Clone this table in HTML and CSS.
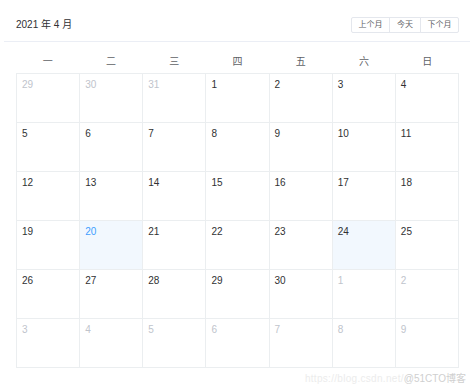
FILE: index.html
```html
<!DOCTYPE html>
<html lang="zh">
<head>
<meta charset="utf-8">
<link rel="stylesheet" href="styles.css">
</head>
<body>
<div class="calendar">
  <div class="cal-header">
    <div class="cal-title">2021 年 4 月</div>
    <div class="btn-group">
      <button class="btn">上个月</button>
      <button class="btn">今天</button>
      <button class="btn">下个月</button>
    </div>
  </div>
  <div class="cal-body">
    <div class="weekdays">
      <div>一</div><div>二</div><div>三</div><div>四</div><div>五</div><div>六</div><div>日</div>
    </div>
    <div class="grid">
      <div class="cell other">29</div><div class="cell other">30</div><div class="cell other">31</div><div class="cell">1</div><div class="cell">2</div><div class="cell">3</div><div class="cell">4</div>
      <div class="cell">5</div><div class="cell">6</div><div class="cell">7</div><div class="cell">8</div><div class="cell">9</div><div class="cell">10</div><div class="cell">11</div>
      <div class="cell">12</div><div class="cell">13</div><div class="cell">14</div><div class="cell">15</div><div class="cell">16</div><div class="cell">17</div><div class="cell">18</div>
      <div class="cell">19</div><div class="cell selected today">20</div><div class="cell">21</div><div class="cell">22</div><div class="cell">23</div><div class="cell selected">24</div><div class="cell">25</div>
      <div class="cell">26</div><div class="cell">27</div><div class="cell">28</div><div class="cell">29</div><div class="cell">30</div><div class="cell other">1</div><div class="cell other">2</div>
      <div class="cell other">3</div><div class="cell other">4</div><div class="cell other">5</div><div class="cell other">6</div><div class="cell other">7</div><div class="cell other">8</div><div class="cell other">9</div>
    </div>
  </div>
  <div class="watermark"><span class="wm-url">https://blog.csdn.net/</span><span class="wm-brand">@51CTO博客</span></div>
</div>
</body>
</html>
```

FILE: styles.css
```css
* { box-sizing: border-box; }
html, body { margin: 0; padding: 0; background: #fff; }
body {
  font-family: "Liberation Sans", Arial, "Noto Sans CJK SC", sans-serif;
  color: #303133;
  width: 474px;
  height: 387px;
  overflow: hidden;
}
.calendar {
  margin: 0 4px;
  width: 466px;
}
.cal-header {
  height: 42px;
  display: flex;
  justify-content: space-between;
  align-items: flex-end;
  padding: 0 11px 8px 12px;
  border-bottom: 1px solid #ebeef5;
}
.cal-title {
  font-size: 10px;
  line-height: 16px;
  color: #303133;
}
.btn-group {
  display: flex;
  height: 16px;
}
.btn {
  font-family: inherit;
  font-size: 8px;
  line-height: 14px;
  height: 16px;
  color: #606266;
  background: #fff;
  border: 1px solid #e4e7ed;
  margin: 0 0 0 -1px;
  padding: 0;
  cursor: pointer;
}
.btn:nth-child(1) { width: 39px; margin-left: 0; border-radius: 2px 0 0 2px; }
.btn:nth-child(2) { width: 32px; }
.btn:nth-child(3) { width: 39px; border-radius: 0 2px 2px 0; }
.cal-body {
  padding: 7px 11px 0 12px;
}
.weekdays {
  display: grid;
  grid-template-columns: repeat(7, 1fr);
  height: 24px;
  line-height: 25px;
  font-size: 10px;
  color: #606266;
  text-align: center;
}
.grid {
  display: grid;
  grid-template-columns: repeat(7, 1fr);
  grid-auto-rows: 49px;
  border-top: 1px solid #ebeef0;
  border-left: 1px solid #ebeef0;
}
.cell {
  border-right: 1px solid #ebeef0;
  border-bottom: 1px solid #ebeef0;
  padding: 5px 5px;
  font-size: 10px;
  line-height: 12px;
  color: #303133;
}
.cell.other { color: #c0c4cc; }
.cell.selected { background: #f2f8fe; }
.cell.today { color: #409eff; }
.watermark {
  display: flex;
  justify-content: flex-end;
  padding: 4px 4px 0 0;
  font-size: 10px;
  line-height: 13px;
}
.wm-url { color: #ececec; letter-spacing: 0.3px; }
.wm-brand { color: #cfcfcf; }
```
